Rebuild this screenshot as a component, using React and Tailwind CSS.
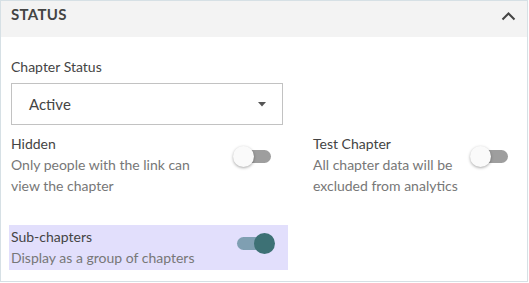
function Toggle({ on, className = "" }) {
  return (
    <div className={`relative w-[42px] h-[21px] flex items-center shrink-0 ${className}`}>
      <div
        className={`ml-[4px] w-[34px] h-[13px] rounded-full ${on ? "bg-[#7f9fb2]" : "bg-[#9e9e9e]"}`}
      />
      <div
        className={`absolute top-0 w-[21px] h-[21px] rounded-full ${
          on ? "left-[21px] bg-[#3d7175]" : "left-0 bg-[#fafafa] shadow-[0_1px_3px_rgba(0,0,0,0.35)]"
        }`}
      />
    </div>
  );
}

function Setting({ title, desc, on, toggleClass }) {
  return (
    <div className="flex items-start justify-between">
      <div className="flex flex-col text-[14px] leading-[21px]">
        <span className="text-[#444]">{title}</span>
        <span className="text-[#777]">{desc}</span>
      </div>
      <Toggle on={on} className={toggleClass} />
    </div>
  );
}

export default function App() {
  return (
    <div className="w-[528px] h-[282px] border border-[#d6e0e5] bg-white font-['Lato',sans-serif] flex flex-col">
      <div className="h-[36px] bg-[#f3f3f3] flex items-start justify-between pl-[10px] pr-[11px] pt-[4px]">
        <span className="text-[15px] leading-[18px] font-bold text-[#444] tracking-[0.02em]">STATUS</span>
        <svg width="15" height="9" viewBox="0 0 15 9" className="mt-[7px]">
          <path d="M1.5 7.5 L7.5 1.5 L13.5 7.5" fill="none" stroke="#444" strokeWidth="2" />
        </svg>
      </div>
      <div className="px-[10px] pt-[19px]">
        <div className="text-[14px] text-[#444] leading-[21px]">Chapter Status</div>
        <div className="mt-[6px] w-[272px] h-[42px] border border-[#c2c2c2] flex items-center justify-between pl-[17px] pr-[16px]">
          <span className="text-[15px] text-[#444]">Active</span>
          <svg width="8" height="5" viewBox="0 0 8 5">
            <path d="M0 0h8L4 4.5z" fill="#555" />
          </svg>
        </div>
        <div className="mt-[8px] grid grid-cols-[264px_199px] gap-x-[38px]">
          <Setting
            title="Hidden"
            desc={<>Only people with the link can<br />view the chapter</>}
            toggleClass="mt-[13px]"
          />
          <Setting
            title="Test Chapter"
            desc={<>All chapter data will be<br />excluded from analytics</>}
            toggleClass="mt-[13px]"
          />
        </div>
        <div className="mt-[29px] -ml-[2px] w-[279px] bg-[#e2dffc] pl-[2px] pr-[13px] pt-[1px] pb-[2px]">
          <Setting
            title="Sub-chapters"
            desc="Display as a group of chapters"
            on
            toggleClass="mt-[7px]"
          />
        </div>
      </div>
    </div>
  );
}
